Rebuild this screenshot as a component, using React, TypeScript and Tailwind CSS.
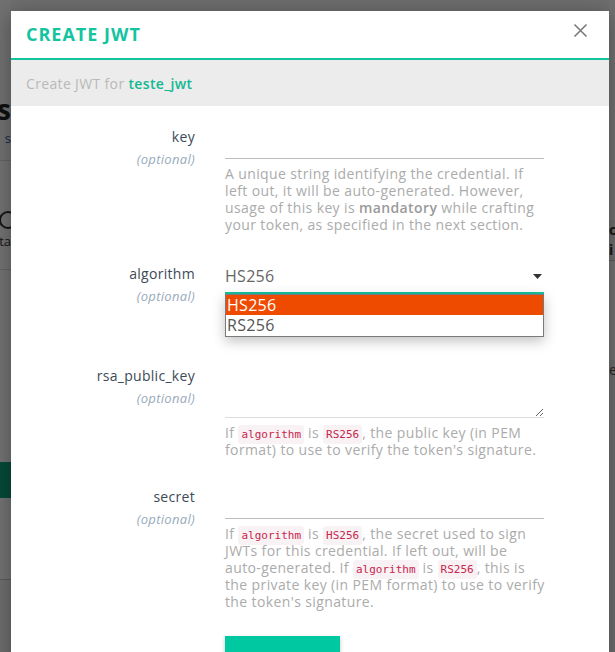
import React from 'react';

const Code: React.FC<{ children: React.ReactNode }> = ({ children }) => (
  <code className="rounded-[3px] bg-[#f9f2f4] px-[3px] py-[3px] text-[11px] leading-none tracking-normal text-[#c7254e] [font-family:'DejaVu_Sans_Mono',monospace]">
    {children}
  </code>
);

const Label: React.FC<{ name: string; pt: string }> = ({ name, pt }) => (
  <div className={`flex flex-col items-end ${pt}`}>
    <span className="text-[14px] leading-5 tracking-[0.3px] text-[#3d4a57]">{name}</span>
    <span className="mt-[3px] text-[13px] italic leading-[18px] tracking-[0.3px] text-[#98aabb]">(optional)</span>
  </div>
);

const Help: React.FC<{ children: React.ReactNode }> = ({ children }) => (
  <p className="mt-[6px] whitespace-nowrap text-[14px] leading-[17px] tracking-[0.38px] text-[#ababab]">{children}</p>
);

const BackgroundPage = () => (
  <div className="flex h-full w-full justify-between bg-[#f4f4f4]">
    <div className="flex w-[11px] flex-col items-end overflow-hidden">
      <div className="h-[80px] w-full shrink-0 bg-[#fafafa]" />
      <div className="flex h-[80px] w-full shrink-0 flex-col items-end bg-[#fbfbfb]">
        <span className="mt-[14px] text-[28px] font-bold leading-[30px] text-[#222]">s</span>
        <span className="mt-[6px] text-[13px] leading-4 text-[#2f5d9e]">s</span>
      </div>
      <div className="flex h-[110px] w-full shrink-0 flex-col items-end border-y border-[#ddd] bg-white">
        <span className="mt-[50px] mr-[-6px] h-[18px] w-[18px] shrink-0 rounded-full border-2 border-[#333]" />
        <span className="mt-[4px] text-[13px] leading-4 text-[#333]">eta</span>
      </div>
      <div className="h-[192px] w-full shrink-0 bg-white" />
      <div className="h-[36px] w-full shrink-0 bg-[#0fa57f]" />
      <div className="h-[82px] w-full shrink-0 border-b border-[#ccc] bg-white" />
    </div>
    <div className="flex w-[6px] flex-col overflow-hidden">
      <div className="h-[220px] w-full shrink-0 bg-[#fafafa]" />
      <span className="text-[14px] font-bold leading-[20px] text-[#333]">c</span>
      <span className="text-[14px] font-bold leading-[20px] text-[#333]">i</span>
      <div className="h-[100px] w-full shrink-0 border-t border-[#ccc] bg-white" />
      <span className="text-[14px] leading-[20px] text-[#555]">e</span>
    </div>
  </div>
);

export default function App() {
  return (
    <div className="relative h-[652px] w-[615px] overflow-hidden [font-family:'Open_Sans',sans-serif]">
      <BackgroundPage />
      <div className="absolute inset-0 bg-black/55" />

      <div className="absolute left-[11px] top-[11px] w-[598px] bg-white pb-10 shadow-[0_4px_20px_rgba(0,0,0,0.35)]">
        <div className="flex h-[49px] items-center justify-between border-b-2 border-[#14c49f] pl-[15px] pr-[21px]">
          <h2 className="text-[18px] font-bold tracking-[1px] text-[#14c49f]">CREATE JWT</h2>
          <svg width="15" height="15" viewBox="0 0 15 15" className="mt-[-8px]">
            <path d="M1.5 1.5L13.5 13.5M13.5 1.5L1.5 13.5" stroke="#7a7a7a" strokeWidth="1.6" fill="none" />
          </svg>
        </div>
        <div className="flex h-[46px] items-center bg-[#ececec] px-[15px] text-[14px] tracking-[0.35px] text-[#b9b9b9]">
          Create JWT for&nbsp;<span className="font-semibold text-[#14b893]">teste_jwt</span>
        </div>

        <div className="flex flex-col pt-[19px]">
          <div className="grid grid-cols-[184px_319px] gap-x-[30px]">
            <Label name="key" pt="pt-[2px]" />
            <div>
              <input className="block h-[34px] w-full border-0 border-b border-[#bcbcbc] text-[16px] outline-none" />
              <Help>
                A unique string identifying the credential. If
                <br />
                left out, it will be auto-generated. However,
                <br />
                usage of this key is <b className="font-semibold text-[#9a9a9a]">mandatory</b> while crafting
                <br />
                your token, as specified in the next section.
              </Help>
            </div>
          </div>

          <div className="mt-[27px] grid grid-cols-[184px_319px] gap-x-[30px]">
            <Label name="algorithm" pt="pt-[4px]" />
            <div>
              <div className="relative flex h-[34px] items-center justify-between border-b-2 border-[#14c49f] pr-[2px]">
                <span className="text-[16px] tracking-[0.3px] text-[#666]">HS256</span>
                <svg width="9" height="5" viewBox="0 0 9 5">
                  <path d="M0 0H9L4.5 5Z" fill="#333" />
                </svg>
                <div className="absolute left-0 right-0 top-full z-10 mt-[2px] border border-[#7a7a7a] bg-white shadow-[0_4px_12px_rgba(0,0,0,0.25)]">
                  <div className="h-[20px] bg-[#ef4b00] pl-[1px] text-[16px] leading-[20px] tracking-[0.3px] text-white">HS256</div>
                  <div className="h-[21px] pl-[1px] text-[16px] leading-[21px] tracking-[0.3px] text-[#555]">RS256</div>
                </div>
              </div>
            </div>
          </div>

          <div className="mt-[57px] grid grid-cols-[184px_319px] gap-x-[30px]">
            <Label name="rsa_public_key" pt="pt-[4px]" />
            <div>
              <textarea className="block h-[56px] w-full resize-y border-0 border-b border-[#dcdcdc] outline-none" />
              <Help>
                If <Code>algorithm</Code> is <Code>RS256</Code>, the public key (in PEM
                <br />
                format) to use to verify the token's signature.
              </Help>
            </div>
          </div>

          <div className="mt-[27px] grid grid-cols-[184px_319px] gap-x-[30px]">
            <Label name="secret" pt="pt-[2px]" />
            <div>
              <input className="block h-[34px] w-full border-0 border-b border-[#bcbcbc] text-[16px] outline-none" />
              <Help>
                If <Code>algorithm</Code> is <Code>HS256</Code>, the secret used to sign
                <br />
                JWTs for this credential. If left out, will be
                <br />
                auto-generated. If <Code>algorithm</Code> is <Code>RS256</Code>, this is
                <br />
                the private key (in PEM format) to use to verify
                <br />
                the token's signature.
              </Help>
              <button className="mt-[26px] h-[40px] w-[115px] bg-[#00c8a0] shadow-[0_2px_4px_rgba(0,0,0,0.25)]" />
            </div>
          </div>
        </div>
      </div>
    </div>
  );
}
